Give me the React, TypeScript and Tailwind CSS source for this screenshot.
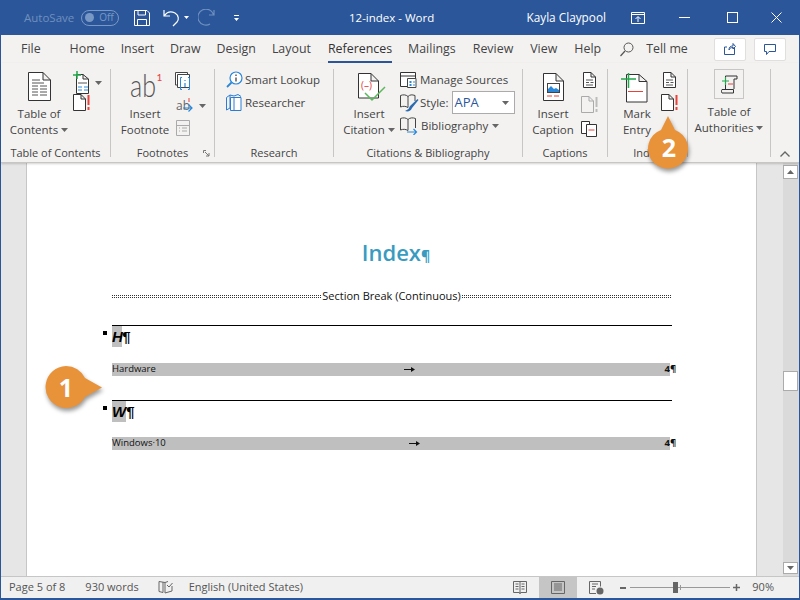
import type { ReactNode } from 'react';

const red = '#e8413a';
const blue = '#2b88d8';
const green = '#21a84a';

const Caret = ({ className = '' }: { className?: string }) => (
  <svg width="7" height="4" viewBox="0 0 7 4" className={className}>
    <path d="M0 0h7L3.500 4z" fill="#666" />
  </svg>
);

const TocIcon = () => (
  <svg width="23" height="29" viewBox="0 0 23 29">
    <path d="M.5.5H15L22.500 8V28.500H.5z M15 .5V8H22.500" fill="#fff" stroke="#333" />
    <path d="M4 8h8M4 11h12M4 14h6M12 14h7M4 17h6M12 17h7M4 20h6M12 20h7M4 23h6M12 23h7" stroke="#555" />
  </svg>
);

const AddTextIcon = () => (
  <svg width="17" height="23" viewBox="0 0 17 23">
    <path d="M3.500 3.500H10L15.500 8V22.500H3.500z M10 3.500V8H15.500" fill="#fff" stroke="#333" />
    <path d="M4 0v8M0 4h8" stroke={green} strokeWidth="1.500" />
    <path d="M5 12h9" stroke="#555" />
    <path d="M5 16h4M11 16h4M5 19h4M11 19h4" stroke={blue} />
  </svg>
);

const PageBang = ({ bang = red, stroke = '#333', fill = '#fff' }: { bang?: string; stroke?: string; fill?: string }) => (
  <svg width="18" height="17" viewBox="0 0 18 17">
    <path d="M.5.5H8L12.500 5V16.500H.5z M8 .5V5H12.500" fill={fill} stroke={stroke} />
    <path d="M15.500 1v10M15.500 13v3" stroke={bang} strokeWidth="2" />
  </svg>
);

const EndnoteIcon = () => (
  <svg width="17" height="18" viewBox="0 0 17 18">
    <path d="M.5.5H12.500V13H.5z" fill="#fff" stroke="#444" />
    <path d="M2.500 2.500H14.500V15.500H2.500z" fill="#fff" stroke="#444" />
    <path d="M7 5.500H5.500V17.500H7M13 5.500h1.500V17.500H13" fill="none" stroke={blue} />
    <path d="M10 8v1M10 11v4" stroke={blue} strokeWidth="1.200" />
  </svg>
);

const NextFootnoteIcon = () => (
  <svg width="18" height="18" viewBox="0 0 18 18">
    <text x="0" y="13" fontFamily="'Open Sans', sans-serif" fontSize="12" fill="#666">ab</text>
    <path d="M13 1v4" stroke={red} />
    <path d="M7 11h9M12.500 7.500 16 11l-3.500 3.500" fill="none" stroke={blue} strokeWidth="1.200" />
  </svg>
);

const ShowNotesIcon = () => (
  <svg width="14" height="16" viewBox="0 0 14 16">
    <path d="M.5.5h13v15H.5zM.5 5.500h13" fill="#f3f2f1" stroke="#aaa" />
    <path d="M3 8h1M6 8h5M3 11h1M6 11h5" stroke="#aaa" />
  </svg>
);

const SmartIcon = () => (
  <svg width="17" height="17" viewBox="0 0 17 17">
    <circle cx="10" cy="7" r="6" fill="#fff" stroke={blue} strokeWidth="1.200" />
    <path d="M5.500 11.500 1 16" stroke={blue} strokeWidth="1.800" />
    <path d="M10 3.500v1.500M10 6.500v4" stroke="#333" strokeWidth="1.200" />
  </svg>
);

const ResearcherIcon = () => (
  <svg width="17" height="17" viewBox="0 0 17 17">
    <path d="M.5 3.500 4 1v13l-3.500 2zM4 1l4 1 4-1.500 3 2" fill="none" stroke="#2b7cd3" />
    <path d="M4.500 3.500h10.500v13H4.500zM8 3.500v13" fill="#fff" stroke="#2b7cd3" />
  </svg>
);

const CitationIcon = () => (
  <svg width="28" height="30" viewBox="0 0 28 30">
    <path d="M.5.5H13L20.500 8V25H.5z M13 .5V8H20.500" fill="#fff" stroke="#333" />
    <text x="3" y="16" fontFamily="'Open Sans', sans-serif" fontSize="10" fill={red}>(–)</text>
    <path d="M7 20l7 7L27 14" fill="none" stroke="#5cb85c" strokeWidth="1.500" />
  </svg>
);

const SourcesIcon = () => (
  <svg width="17" height="16" viewBox="0 0 17 16">
    <path d="M.5.5h15v14H.5zM.5 4h15" fill="#fff" stroke="#333" />
    <path d="M7.500 6.500h8.500v9H7.500z" fill="#fff" stroke="#444" />
    <path d="M9.500 9h2v2h-2zM9.500 12h2v2h-2z" fill={blue} />
    <path d="M13 10h2M13 13h2" stroke={blue} />
  </svg>
);

const StyleIcon = () => (
  <svg width="19" height="18" viewBox="0 0 19 18">
    <path d="M8 2.500C6 .5 3 .5.5 1.500V13c2.500-1 5-1 7.500 .5 0 0 0-11 0-11zM8 2.500C10 .5 12 .5 15 1.500V7" fill="none" stroke="#444" />
    <path d="M17.500 5 10 12l-1.500 3L5 17c3 1 6 0 7-3l6.500-8z" fill="#2b6cb0" />
  </svg>
);

const BiblioIcon = () => (
  <svg width="18" height="18" viewBox="0 0 18 18">
    <path d="M8 2.500C6 .5 3 .5.5 1.500V13c2.500-1 5-1 7.500 .5zM8 2.500C10 .5 13 .5 15.500 1.500V11" fill="none" stroke="#444" />
    <path d="M7 15h9.500M13.500 12l3 3-3 3" fill="none" stroke={blue} strokeWidth="1.200" />
  </svg>
);

const CaptionIcon = () => (
  <svg width="21" height="28" viewBox="0 0 21 28">
    <path d="M.5.5H13L20.500 8V27.500H.5z M13 .5V8H20.500" fill="#fff" stroke="#333" />
    <rect x="4.500" y="10.500" width="12" height="9" fill="#fff" stroke="#444" />
    <path d="M5 19v-3l3-3 3 3 2-1 3 2v2z" fill={blue} />
    <path d="M4 23h5M11 23h5" stroke={red} />
  </svg>
);

const SmallDoc = () => (
  <svg width="13" height="16" viewBox="0 0 13 16">
    <path d="M.5.5H8L12.500 5V15.500H.5z M8 .5V5H12.500" fill="#fff" stroke="#333" />
    <path d="M3 8h7M3 10.500h3M7.500 10.500h3M3 13h7" stroke="#555" />
  </svg>
);

const CrossRefIcon = () => (
  <svg width="16" height="16" viewBox="0 0 16 16">
    <path d="M.5.5h8v12h-8z" fill="#fff" stroke="#333" />
    <path d="M5.500 3.500h10v12h-10z" fill="#fff" stroke="#333" />
    <path d="M7.500 9h6" stroke={red} />
  </svg>
);

const MarkEntryIcon = () => (
  <svg width="27" height="30" viewBox="0 0 27 30">
    <path d="M5.500 1.500H18L26 8.500V29H5.500z M18 1.500V8.500H26" fill="#fff" stroke="#333" />
    <path d="M7.500 0v15M0 6h15" stroke={green} strokeWidth="1.500" />
    <path d="M7 18.500h15" stroke={red} />
  </svg>
);

const AuthoritiesIcon = () => (
  <svg width="17" height="19" viewBox="0 0 17 19">
    <path d="M4.500 1H16v3h-3v10" fill="none" stroke="#333" />
    <path d="M4.500 1v13M1 14.500h11.500v3.500H1c-.7-1-.7-2.500 0-3.500z" fill="none" stroke="#333" />
    <path d="M4.500 2v8M1 6h7" stroke={green} strokeWidth="1.200" />
    <path d="M7 9h5" stroke={red} />
  </svg>
);

// big ribbon button: icon then two lines of text
const BigButton = ({ icon, lines, caret, className = '' }: { icon: ReactNode; lines: string[]; caret?: boolean; className?: string }) => (
  <div className={`flex flex-col items-center ${className}`}>
    <div className="h-[34px] flex items-start justify-center">{icon}</div>
    <div className="leading-[16px] text-center whitespace-nowrap">{lines[0]}</div>
    <div className="leading-[16px] text-center whitespace-nowrap flex items-center gap-[3px]">
      {lines[1]}
      {caret && <Caret />}
    </div>
  </div>
);

const Group = ({ label, className, children }: { label?: string; className: string; children: ReactNode }) => (
  <div className={`relative h-[88px] shrink-0 border-r border-[#c8c6c4] ${className}`}>
    {children}
    {label && <div className="absolute left-0 right-0 bottom-[-3px] text-center text-[11px] leading-[14px] whitespace-nowrap">{label}</div>}
  </div>
);

const tabs = ['Home', 'Insert', 'Draw', 'Design', 'Layout'];
const tabsAfter = ['Mailings', 'Review', 'View', 'Help'];

const TitleBar = () => (
  <div className="relative h-[35px] shrink-0 bg-[#2b579a] flex items-center text-white text-[11.500px]">
    <span className="ml-[24px] text-[#6f8fbf]">AutoSave</span>
    <div className="ml-[7px] w-[38px] h-[16px] rounded-full border border-[#7a98c5] flex items-center pl-[3px] gap-[5px]">
      <span className="w-[9px] h-[9px] rounded-full bg-[#7a98c5]" />
      <span className="text-[10px] text-[#7a98c5]">Off</span>
    </div>
    <svg width="16" height="16" viewBox="0 0 16 16" className="ml-[15px]">
      <path d="M.5.5H13L15.500 3V15.500H.5zM4 .5V5H11.500V.5M3.500 15.500V9.500H12.500V15.500" fill="none" stroke="#fff" />
    </svg>
    <svg width="18" height="18" viewBox="0 0 18 18" className="ml-[13px]">
      <path d="M1 1v6h6M1.500 6.500C4 3 8 2 12 4c4 2.500 4 7 2 9l-4 4" fill="none" stroke="#fff" strokeWidth="1.200" />
    </svg>
    <svg width="5" height="3" viewBox="0 0 5 3" className="ml-[3px]"><path d="M0 0h5L2.500 3z" fill="#fff" /></svg>
    <svg width="17" height="17" viewBox="0 0 17 17" className="ml-[9px]">
      <path d="M16 1v5h-5M15.500 5.500A8 8 0 1 0 12 15" fill="none" stroke="#6f8fbf" strokeWidth="1.200" />
    </svg>
    <svg width="5" height="6" viewBox="0 0 5 6" className="ml-[19px]"><path d="M0 0h5v1H0zM0 3h5L2.500 6z" fill="#fff" /></svg>
    <span className="absolute left-[349px] top-[9px]">12-index - Word</span>
    <div className="ml-auto flex items-center">
      <span className="text-[11.800px]">Kayla Claypool</span>
      <svg width="14" height="12" viewBox="0 0 14 12" className="ml-[25px]">
        <path d="M.5.5h13v11H.5zM.5 2.500h13M7 10V5M4.500 7 7 4.500 9.500 7" fill="none" stroke="#fff" />
      </svg>
      <div className="ml-[34px] w-[11px] h-px bg-white" />
      <div className="ml-[37px] w-[11px] h-[11px] border border-white" />
      <svg width="11" height="11" viewBox="0 0 11 11" className="ml-[33px] mr-[18px]">
        <path d="M.5.5l10 10M10.500.5l-10 10" stroke="#fff" />
      </svg>
    </div>
  </div>
);

const TabRow = () => (
  <div className="relative h-[28px] shrink-0 flex items-center pl-[20px] text-[12.400px] text-[#444] bg-[#f3f2f1] whitespace-nowrap">
    <span>File</span>
    <div className="ml-[29px] flex gap-[16px]">
      {tabs.map((t) => <span key={t}>{t}</span>)}
    </div>
    <div className="relative ml-[17px] font-medium text-[#333]">
      References
      <div className="absolute left-0 right-0 top-[21px] h-[2px] bg-[#2b579a]" />
    </div>
    <div className="ml-[16px] flex gap-[17px]">
      {tabsAfter.map((t) => <span key={t}>{t}</span>)}
    </div>
    <svg width="14" height="15" viewBox="0 0 14 15" className="ml-[19px]">
      <circle cx="8.500" cy="5.500" r="4.500" fill="none" stroke="#555" />
      <path d="M5 9 .5 14" stroke="#555" strokeWidth="1.200" />
    </svg>
    <span className="ml-[12px]">Tell me</span>
    <div className="ml-auto mr-[13px] flex gap-[8px]">
      <div className="w-[32px] h-[23px] bg-white border border-[#e1dfdd] rounded-[2px] flex items-center justify-center">
        <svg width="12" height="12" viewBox="0 0 12 12">
          <path d="M8.500 5H10.500V11.500H.5V4H3M5 7C5 4 6.500 3 9 3V.5L11.500 3.500 9 6V4.500C7 4.500 6 5 5 7z" fill="none" stroke="#2b579a" />
        </svg>
      </div>
      <div className="w-[32px] h-[23px] bg-white border border-[#e1dfdd] rounded-[2px] flex items-center justify-center">
        <svg width="12" height="11" viewBox="0 0 12 11">
          <path d="M.5.5h11v7H5L2.500 10.500V7.500h-2z" fill="none" stroke="#2b579a" />
        </svg>
      </div>
    </div>
  </div>
);

const Ribbon = () => (
  <div className="relative z-10 h-[100px] shrink-0 flex pt-[6px] bg-[#f3f2f1] text-[11.500px] text-[#444] border-b border-[#c8c6c4] shadow-[0_1px_2px_rgba(0,0,0,0.18)]">
    <Group label="Table of Contents" className="w-[110px]">
      <div className="flex pt-[3px]">
        <BigButton icon={<TocIcon />} lines={['Table of', 'Contents']} caret className="w-[76px]" />
        <div className="flex flex-col -mt-[1px] -ml-[4px]">
          <div className="flex items-center gap-[5px]"><AddTextIcon /><Caret /></div>
          <PageBang />
        </div>
      </div>
    </Group>

    <Group label="Footnotes" className="w-[104px]">
      <div className="flex pt-[3px]">
        <BigButton
          className="w-[64px] ml-[2px]"
          lines={['Insert', 'Footnote']}
          icon={
            <svg width="33" height="40" viewBox="0 0 33 40" className="ml-[3px] -mt-[8px]">
              <text x="0" y="33" fontFamily="Lato, sans-serif" fontWeight="300" fontSize="32" fill="#555" textLength="26" lengthAdjust="spacingAndGlyphs">ab</text>
              <text x="26.500" y="17" fontFamily="Lato, sans-serif" fontSize="10" fill={red}>1</text>
            </svg>
          }
        />
        <div className="flex flex-col -ml-[2px] gap-[8px]">
          <EndnoteIcon />
          <div className="flex items-center gap-[5px] ml-[1px] -mt-[1px]"><NextFootnoteIcon /><Caret /></div>
          <div className="-mt-[3px] ml-[1px]"><ShowNotesIcon /></div>
        </div>
      </div>
      <svg width="7" height="7" viewBox="0 0 7 7" className="absolute right-[4px] bottom-[0px]">
        <path d="M.5 3V.5H3M2 2l4 4M6 3v3H3" fill="none" stroke="#777" />
      </svg>
    </Group>

    <Group label="Research" className="w-[119px]">
      <div className="flex flex-col pl-[11px] pt-[2px] gap-[6px]">
        <div className="flex items-center gap-[2px]"><SmartIcon /><span>Smart Lookup</span></div>
        <div className="flex items-center gap-[2px]"><ResearcherIcon /><span>Researcher</span></div>
      </div>
    </Group>

    <Group label="Citations & Bibliography" className="w-[189px]">
      <div className="flex pt-[3px]">
        <BigButton icon={<div className="mt-[1px] ml-[6px]"><CitationIcon /></div>} lines={['Insert', 'Citation']} caret className="w-[62px] ml-[4px]" />
        <div className="flex flex-col -mt-[2px]">
          <div className="flex items-center gap-[3px] h-[20px]"><SourcesIcon /><span>Manage Sources</span></div>
          <div className="flex items-center gap-[1px] h-[25px]">
            <StyleIcon /><span>Style:</span>
            <div className="ml-[2px] w-[63px] h-[23px] bg-white border border-[#ababab] flex items-center pl-[2px] pr-[5px] justify-between text-[#2b579a] text-[13px]">
              APA<Caret />
            </div>
          </div>
          <div className="flex items-center gap-[3px] h-[22px]"><BiblioIcon /><span>Bibliography</span><Caret className="ml-[1px]" /></div>
        </div>
      </div>
    </Group>

    <Group label="Captions" className="w-[85px]">
      <div className="flex pt-[3px]">
        <BigButton icon={<div className="mt-[1px]"><CaptionIcon /></div>} lines={['Insert', 'Caption']} className="w-[60px]" />
        <div className="flex flex-col -ml-[2px] gap-[8px]">
          <div className="pl-[2px]"><SmallDoc /></div>
          <PageBang bang="#bbb" stroke="#aaa" fill="#f3f2f1" />
          <CrossRefIcon />
        </div>
      </div>
    </Group>

    <Group label="Index" className="w-[80px]">
      <div className="flex pt-[3px]">
        <BigButton icon={<div className="mt-[1px] -ml-[5px]"><MarkEntryIcon /></div>} lines={['Mark', 'Entry']} className="w-[54px] ml-[2px]" />
        <div className="flex flex-col -ml-[3px] gap-[6px]">
          <div className="pl-[2px]"><SmallDoc /></div>
          <PageBang />
        </div>
      </div>
    </Group>

    <Group className="w-[83px]">
      <div className="flex flex-col items-center">
        <div className="w-[30px] h-[30px] border border-[#c8c6c4] flex items-center justify-center"><AuthoritiesIcon /></div>
        <div className="mt-[5px] leading-[16px]">Table of</div>
        <div className="leading-[16px] flex items-center gap-[3px]">Authorities<Caret /></div>
      </div>
    </Group>

    <svg width="10" height="6" viewBox="0 0 10 6" className="absolute left-[779px] top-[88px]">
      <path d="M.5 5.500 5 1l4.500 4.500" fill="none" stroke="#666" strokeWidth="1.400" />
    </svg>
  </div>
);

const TabArrow = () => (
  <svg width="11" height="5" viewBox="0 0 11 5" className="shrink-0">
    <path d="M0 2h7v-2l4 2.500-4 2.500v-2H0z" fill="#111" />
  </svg>
);

const IndexHead = ({ letter, wide }: { letter: string; wide: string }) => (
  <div className="relative w-[560px] h-[38px] border-t border-black">
    <span className="absolute left-[-9px] top-[5px] w-[4px] h-[4px] bg-black" />
    <div className="flex items-center h-[21px] font-['Liberation_Sans',sans-serif] font-bold italic text-[15px] leading-[21px] text-black">
      <span className={`bg-[#bfbfbf] h-[21px] ${wide}`}>{letter}</span>
      <span>¶</span>
    </div>
  </div>
);

const IndexEntry = ({ text, col }: { text: string; col: string }) => (
  <div className="flex items-center w-[558px] h-[13px] bg-[#bfbfbf] text-[9.500px] text-[#111]">
    <span className={`shrink-0 ${col}`}>{text}</span>
    <TabArrow />
    <span className="ml-auto font-bold">4</span>
    <span className="-mr-[6px] w-[6px] font-bold">¶</span>
  </div>
);

const Document = () => (
  <div className="flex-1 min-h-0 flex bg-[#e6e6e6] overflow-hidden">
    <div className="w-[731px] ml-[25px] bg-white border-x border-[#c6c6c6] shrink-0 pl-[85px]">
      <div className="w-[560px] pl-[8px] mt-[74px] text-center text-[#3a9bc0] font-['Open_Sans',sans-serif] text-[22px] leading-[30px] font-semibold">
        Index<span className="text-[14px] font-bold">¶</span>
      </div>
      <div className="w-[559px] mt-[18px] flex items-center text-[11px] leading-[14px] text-[#111]">
        <div className="flex-1 h-[3px] border-y border-dotted border-[#333]" />
        <span className="px-[1px]">Section Break (Continuous)</span>
        <div className="flex-1 h-[3px] border-y border-dotted border-[#333]" />
      </div>
      <div className="mt-[22px]"><IndexHead letter="H" wide="w-[10px]" /></div>
      <IndexEntry text="Hardware" col="w-[292px]" />
      <div className="mt-[24px]"><IndexHead letter="W" wide="w-[14px]" /></div>
      <div className="-mt-[1px]"><IndexEntry text="Windows·10" col="w-[297px]" /></div>
    </div>
    <div className="ml-[26px] w-[16px] bg-[#dadada] shrink-0 flex flex-col">
      <div className="mt-[2px] w-[15px] h-[14px] bg-white border border-[#ababab] flex items-center justify-center">
        <svg width="7" height="4" viewBox="0 0 7 4"><path d="M3.500 0 7 4H0z" fill="#666" /></svg>
      </div>
      <div className="mt-[192px] w-[15px] h-[20px] bg-white border border-[#ababab]" />
      <div className="mt-auto mb-[2px] w-[15px] h-[12px] bg-white border border-[#ababab] flex items-center justify-center">
        <svg width="7" height="4" viewBox="0 0 7 4"><path d="M0 0h7L3.500 4z" fill="#666" /></svg>
      </div>
    </div>
  </div>
);

const StatusBar = () => (
  <div className="h-[22px] shrink-0 flex items-stretch bg-[#f0f0f0] border-t border-[#c6c6c6] text-[11px] text-[#555]">
    <div className="flex items-center pl-[8px]">
      <span>Page 5 of 8</span>
      <span className="ml-[20px]">930 words</span>
      <svg width="15" height="13" viewBox="0 0 15 13" className="ml-[19px]">
        <path d="M7 1.500 1 .5v10l4 1V1M7 1.500V12M7 1.500l3-1M14 5v5l-7 2" fill="none" stroke="#666" />
        <path d="M9 4l2 2 3.500-4" fill="none" stroke="#666" />
      </svg>
      <span className="ml-[16px]">English (United States)</span>
    </div>
    <div className="ml-auto flex items-center">
      <svg width="14" height="13" viewBox="0 0 14 13">
        <path d="M.5.5H7l6.500 0V11.500H7.500v1h-1v-1H.5zM7 .5v11M2.500 3h3M2.500 5.500h3M2.500 8h3M8.500 3h3M8.500 5.500h3M8.500 8h3" fill="none" stroke="#666" />
      </svg>
      <div className="ml-[12px] w-[38px] self-stretch bg-[#c5c5c5] flex items-center justify-center">
        <svg width="14" height="13" viewBox="0 0 14 13">
          <path d="M.5.5h13v12H.5zM3 3h8M3 5h8M3 7h8M3 9h8" fill="none" stroke="#666" />
        </svg>
      </div>
      <svg width="15" height="14" viewBox="0 0 15 14" className="ml-[12px]">
        <path d="M7 12.500H.5V.5h11v5M3 3h6M3 5.500h4M3 8h3" fill="none" stroke="#666" />
        <circle cx="11" cy="10" r="3.500" fill="#666" />
      </svg>
      <div className="ml-[16px] w-[6px] h-[2px] bg-[#666]" />
      <div className="relative ml-[4px] w-[100px] h-px bg-[#999]">
        <span className="absolute left-[43px] top-[-5px] w-[5px] h-[11px] bg-[#666]" />
        <span className="absolute left-[50px] top-[-2px] w-px h-[5px] bg-[#999]" />
      </div>
      <svg width="7" height="7" viewBox="0 0 7 7" className="ml-[3px]"><path d="M3.500 0v7M0 3.500h7" stroke="#666" strokeWidth="1.500" /></svg>
      <span className="ml-[12px] mr-[25px]">90%</span>
    </div>
  </div>
);

const Callout = ({ className, w, h, d }: { className: string; w: number; h: number; d: string }) => (
  <div className={`absolute z-20 ${className}`}>
    <svg width={w} height={h} viewBox={`0 0 ${w} ${h}`} className="absolute inset-0 overflow-visible drop-shadow-[1px_3px_2px_rgba(0,0,0,0.4)]">
      <path d={d} fill="#e8923a" />
    </svg>
  </div>
);

export default function App() {
  return (
    <div className="relative w-[800px] h-[600px] overflow-hidden flex flex-col bg-[#2b579a] pb-[2px] px-[1px] font-['Open_Sans',sans-serif]">
      <div className="-mx-[1px]"><TitleBar /></div>
      <TabRow />
      <Ribbon />
      <Document />
      <StatusBar />
      <Callout className="left-[45px] top-[366px] w-[58px] h-[44px]" w={58} h={44} d="M21 0a21 21 0 0 1 19 12L57 21.500 40 31A21 21 0 1 1 21 0z" />
      <span className="absolute z-30 left-[45px] top-[366px] w-[42px] h-[44px] flex items-center justify-center text-white font-bold text-[25px]">1</span>
      <Callout className="left-[649px] top-[116px] w-[40px] h-[52px]" w={40} h={52} d="M19 0l7 14a20 20 0 1 1-14 0z" />
      <span className="absolute z-30 left-[649px] top-[128px] w-[40px] h-[40px] flex items-center justify-center text-white font-bold text-[25px]">2</span>
    </div>
  );
}
